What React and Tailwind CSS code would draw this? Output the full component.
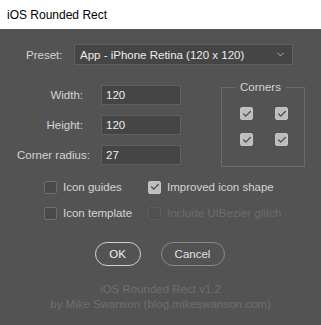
import { Check, ChevronDown } from 'lucide-react';

const Box = ({ checked, disabled }) => (
  <span
    className={`flex h-[13px] w-[13px] shrink-0 items-center justify-center rounded-[2px] border ${
      checked
        ? 'border-[#c4c4c4] bg-[#bdbdbd]'
        : disabled
        ? 'border-[#5c5c5c] bg-[#505050]'
        : 'border-[#6e6e6e] bg-[#4a4a4a]'
    }`}
  >
    {checked && <Check size={10} strokeWidth={3} className="text-[#4a4a4a]" />}
  </span>
);

const Field = ({ label, value }) => (
  <div className="flex items-center">
    <span className="w-[84px] whitespace-nowrap pr-[18px] text-right text-[#d4d4d4]">{label}</span>
    <div className="flex h-[20px] w-[80px] items-center border border-[#5f5f5f] bg-[#454545] px-[4px] text-[#ececec]">
      {value}
    </div>
  </div>
);

const Option = ({ label, checked, disabled }) => (
  <label className="flex items-center gap-[6px] whitespace-nowrap">
    <Box checked={checked} disabled={disabled} />
    <span className={disabled ? 'text-[#6c6c6c]' : 'text-[#d4d4d4]'}>{label}</span>
  </label>
);

export default function App() {
  return (
    <div
      className="flex h-[325px] w-[321px] flex-col bg-[#535353] text-[11.5px] leading-[14px]"
      style={{ fontFamily: '"Liberation Sans", Arial, sans-serif' }}
    >
      <div className="flex h-[29px] shrink-0 items-center bg-white px-[7px] text-[12px] text-black">
        iOS Rounded Rect
      </div>

      <div className="mt-[15px] flex items-center pl-[26px]">
        <span className="w-[48px] text-[#d4d4d4]">Preset:</span>
        <div className="flex h-[21px] w-[219px] items-center justify-between border border-[#606060] bg-[#454545] pl-[5px] pr-[6px] text-[#ececec]">
          <span>App - iPhone Retina (120 x 120)</span>
          <ChevronDown size={11} className="text-[#bdbdbd]" />
        </div>
      </div>

      <div className="mt-[20px] flex">
        <div className="flex flex-col gap-[10px] pl-[17px]">
          <Field label="Width:" value="120" />
          <Field label="Height:" value="120" />
          <Field label="Corner radius:" value="27" />
        </div>
        <div className="relative ml-[40px] mt-[2px] h-[80px] w-[84px] border border-[#6a6a6a]">
          <span className="absolute -top-[8px] left-[13px] bg-[#535353] px-[5px] text-[#d4d4d4]">
            Corners
          </span>
          <div className="grid grid-cols-2 gap-x-[24px] gap-y-[13px] px-[18px] pt-[19px]">
            <Box checked />
            <Box checked />
            <Box checked />
            <Box checked />
          </div>
        </div>
      </div>

      <div className="mt-[13px] grid grid-cols-[104px_1fr] gap-y-[12px] pl-[44px]">
        <Option label="Icon guides" />
        <Option label="Improved icon shape" checked />
        <Option label="Icon template" />
        <Option label="Include UIBezier glitch" disabled />
      </div>

      <div className="mt-[22px] flex justify-center gap-[20px] pr-[2px]">
        <button className="h-[24px] w-[46px] rounded-full border-[1.5px] border-[#d0d0d0] text-[#f0f0f0]">
          OK
        </button>
        <button className="h-[24px] w-[64px] rounded-full border border-[#8a8a8a] text-[#e0e0e0]">
          Cancel
        </button>
      </div>

      <div className="mt-[16px] flex flex-col items-center leading-[15px] text-[#6f6f6f]">
        <span>iOS Rounded Rect v1.2</span>
        <span>by Mike Swanson (blog.mikeswanson.com)</span>
      </div>
    </div>
  );
}
